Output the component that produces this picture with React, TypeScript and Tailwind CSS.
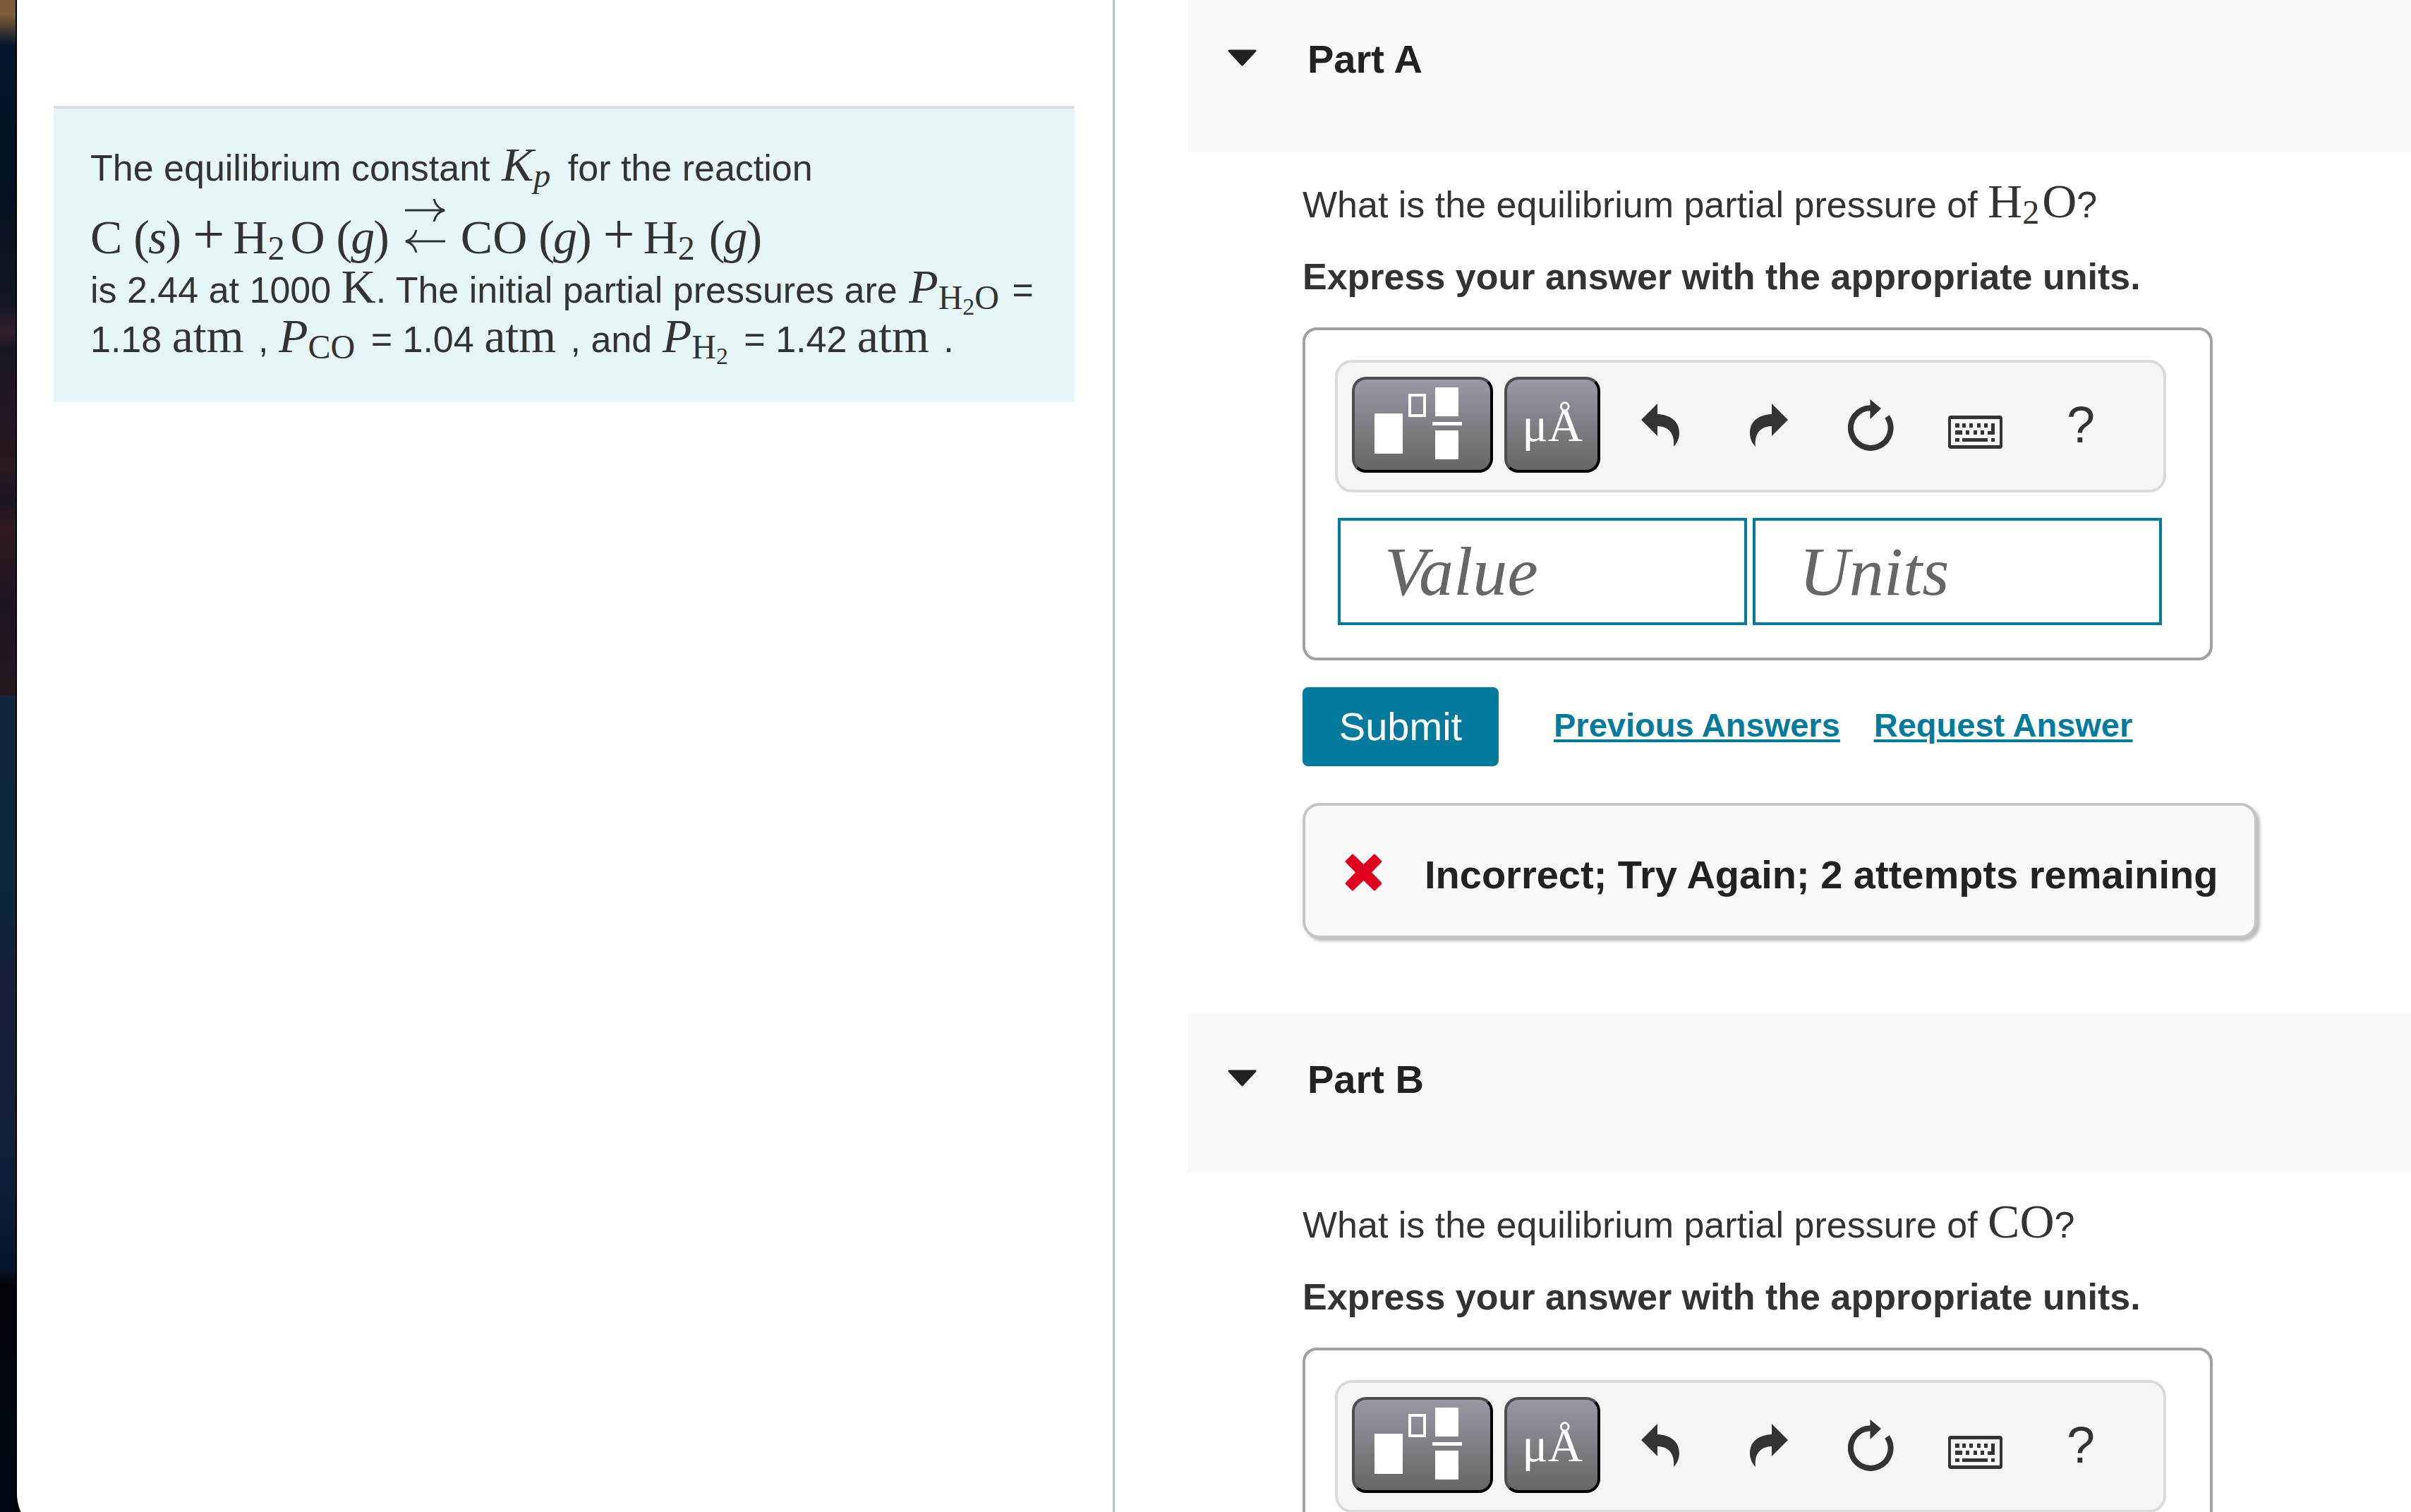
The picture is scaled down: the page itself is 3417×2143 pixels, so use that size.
import type { ReactNode } from "react";

function Math({ children, italic = false }: { children: ReactNode; italic?: boolean }) {
  return (
    <span
      className={
        italic
          ? "font-['Liberation_Serif',serif] text-[68px] leading-[0] italic"
          : "font-['Liberation_Serif',serif] text-[68px] leading-[0]"
      }
    >
      {children}
    </span>
  );
}

function Sub({ children, italic = false }: { children: ReactNode; italic?: boolean }) {
  return (
    <sub
      className={
        italic
          ? "static align-[-9px] font-['Liberation_Serif',serif] text-[48px] leading-[0] italic"
          : "static align-[-9px] font-['Liberation_Serif',serif] text-[48px] leading-[0] not-italic"
      }
    >
      {children}
    </sub>
  );
}

function SubSub({ children }: { children: ReactNode }) {
  return <sub className="static align-[-8px] text-[34px] leading-[0]">{children}</sub>;
}

function Atm() {
  return (
    <span className="mr-1.5">
      <Math>atm</Math>
    </span>
  );
}

function Phase({ children }: { children: ReactNode }) {
  return (
    <span className="ml-4">
      (<i className="-mx-0.5">{children}</i>)
    </span>
  );
}

function Plus() {
  return <span className="mr-3 ml-4 text-[80px] leading-[0]">+</span>;
}

function EquilibriumArrows() {
  return (
    <svg
      className="mx-[22px] inline-block h-[78px] w-[57px] align-baseline"
      viewBox="0 0 57 78"
      fill="none"
      stroke="#333"
      strokeWidth="3"
      role="img"
      aria-label="reversible reaction"
    >
      <path d="M0 17H55M41 1C43 9 48 15 56 17C48 19 43 25 41 33" />
      <path d="M57 61H2M16 45C14 53 9 59 1 61C9 63 14 69 16 77" />
    </svg>
  );
}

function Problem() {
  return (
    <section className="border-t-4 border-[#dcdcdc] bg-[#e6f6f7] pt-[49px] pr-6 pb-[54px] pl-[52px] text-[52px] leading-[70px] text-[#333]">
      <p>
        The equilibrium constant{" "}
        <span className="ml-0.5" />
        <Math italic>
          K<Sub italic>p</Sub>
        </Math>
        <span className="ml-2.5"> for the reaction</span>
      </p>
      <p className="pt-2 pb-[5px] font-['Liberation_Serif',serif] text-[68px] leading-[70px] whitespace-nowrap">
        C<Phase>s</Phase>
        <Plus />H<Sub>2</Sub>
        <span className="ml-2">O</span>
        <Phase>g</Phase>
        <EquilibriumArrows />
        CO<Phase>g</Phase>
        <Plus />H<Sub>2</Sub>
        <span className="ml-1" />
        <Phase>g</Phase>
      </p>
      <p>
        is 2.44 at 1000 <Math>K</Math>. The initial partial pressures are{" "}
        <span className="ml-0.5" />
        <Math italic>
          P
          <Sub>
            H<SubSub>2</SubSub>O
          </Sub>
        </Math>
        <span className="ml-1"> = </span>
        1.18 <Atm /> ,{" "}
        <Math italic>
          P<Sub>CO</Sub>
        </Math>
        <span className="ml-2"> = </span>
        1.04 <Atm /> , and{" "}
        <Math italic>
          P
          <Sub>
            H<SubSub>2</SubSub>
          </Sub>
        </Math>
        <span className="ml-2"> = </span>
        1.42 <Atm /> .
      </p>
    </section>
  );
}

function TemplateIcon() {
  return (
    <svg className="h-32 w-48" viewBox="4 4 192 128" fill="#fff" aria-hidden="true">
      <rect x="32" y="52" width="40" height="57" />
      <rect x="82" y="26" width="21" height="29" fill="none" stroke="#fff" strokeWidth="4" />
      <rect x="118" y="15" width="33" height="41" />
      <rect x="114" y="64" width="42" height="5" />
      <rect x="118" y="76" width="33" height="41" />
    </svg>
  );
}

function UndoIcon() {
  return (
    <svg className="h-[61px] w-[55px]" viewBox="0 0 55 61" fill="#333" aria-hidden="true">
      <path d="M0 23L23 0V15C43 16 54 26 54 42C54 49 51 56 46 61C48 43 39 32 23 32V46Z" />
    </svg>
  );
}

function RedoIcon() {
  return (
    <svg className="h-[61px] w-[55px]" viewBox="0 0 55 61" fill="#333" aria-hidden="true">
      <path d="M55 23L32 0V15C12 16 1 26 1 42C1 49 4 56 9 61C7 43 16 32 32 32V46Z" />
    </svg>
  );
}

function ResetIcon() {
  return (
    <svg className="h-[73px] w-[65px]" viewBox="0 0 65 73" aria-hidden="true">
      <path d="M55.500 24.500A28.300 28.300 0 1 1 32 12.300" fill="none" stroke="#333" strokeWidth="8" />
      <path d="M31.500 0L47 13L31.500 28Z" fill="#333" />
    </svg>
  );
}

function KeyboardIcon() {
  return (
    <svg className="h-[67px] w-[77px]" viewBox="0 -20 77 67" fill="#333" aria-hidden="true">
      <path
        fillRule="evenodd"
        d="M4 0H73A4 4 0 0 1 77 4V43A4 4 0 0 1 73 47H4A4 4 0 0 1 0 43V4A4 4 0 0 1 4 0ZM4 5V42H73V5Z"
      />
      <path d="M10 11h6v6h-6zM20 11h5v6h-5zM30 11h5v6h-5zM41 11h5v6h-5zM51 11h5v6h-5zM61 11h5v16H56v-5h5z" />
      <path d="M10 21h10v6H10zM25 21h5v6h-5zM36 21h5v6h-5zM46 21h5v6h-5z" />
      <path d="M10 32h6v5h-6zM20 32h36v5H20zM61 32h5v5h-5z" />
    </svg>
  );
}

const darkButton =
  "flex h-[136px] items-center justify-center rounded-[20px] border-4 border-t-[#4d4d4d] border-r-black border-b-black border-l-[#4d4d4d] bg-linear-to-b from-[#9a98a5] to-[#666] text-white";
const plainButton = "flex h-[136px] items-center justify-center text-[#333]";

function Toolbar() {
  return (
    <div
      role="toolbar"
      className="flex rounded-3xl border-4 border-[#dadada] bg-[#f5f5f5] px-5 pt-5 pb-6"
    >
      <button type="button" aria-label="Templates" className={`${darkButton} w-[200px]`}>
        <TemplateIcon />
      </button>
      <button
        type="button"
        aria-label="Symbols"
        className={`${darkButton} mr-2 ml-4 w-[136px] font-['Liberation_Serif',serif] text-[68px] leading-none`}
      >
        μÅ
      </button>
      <button type="button" aria-label="Undo" className={`${plainButton} w-[154px]`}>
        <UndoIcon />
      </button>
      <button type="button" aria-label="Redo" className={`${plainButton} w-[152px]`}>
        <RedoIcon />
      </button>
      <button type="button" aria-label="Reset" className={`${plainButton} w-[138px]`}>
        <ResetIcon />
      </button>
      <button type="button" aria-label="Keyboard shortcuts" className={`${plainButton} w-[158px]`}>
        <KeyboardIcon />
      </button>
      <button type="button" aria-label="Help" className={`${plainButton} w-[142px] text-[72px] leading-none`}>
        ?
      </button>
    </div>
  );
}

const field =
  "h-[152px] min-w-0 flex-1 border-4 border-[#047a9c] bg-white px-[62px] font-['Liberation_Serif',serif] text-[98px] text-[#333] italic outline-none placeholder:text-[#666] placeholder:opacity-100";

function AnswerBox({ part }: { part: string }) {
  return (
    <div className="mt-[37px] w-[1290px] max-w-full rounded-[20px] border-4 border-[#a0a0a0] bg-white pt-[42px] pr-[62px] pb-[46px] pl-[42px]">
      <Toolbar />
      <div className="mt-9 mr-1.5 ml-1 flex gap-2">
        <input type="text" aria-label={`Part ${part} value`} placeholder="Value" className={field} />
        <input type="text" aria-label={`Part ${part} units`} placeholder="Units" className={field} />
      </div>
    </div>
  );
}

function PartHeader({ part, first = false }: { part: string; first?: boolean }) {
  return (
    <h2
      className={
        first
          ? "bg-[#f9f9f9] pt-[52px] pb-[100px] pl-14"
          : "bg-[#f9f9f9] pt-[62px] pb-[100px] pl-14"
      }
    >
      <button
        type="button"
        aria-expanded="true"
        className="flex items-center gap-[72px] text-[56px] leading-[64px] font-bold text-[#222]"
      >
        <svg className="mb-1 h-6 w-[41px]" viewBox="0 0 41 24" aria-hidden="true">
          <path d="M2 2H39L20.500 22Z" fill="#222" stroke="#222" strokeWidth="3" strokeLinejoin="round" />
        </svg>
        Part {part}
      </button>
    </h2>
  );
}

function Question({ part, species }: { part: string; species: ReactNode }) {
  return (
    <div className="pt-[39px] pl-[162px] text-[52px] leading-[70px] text-[#333]">
      <p>
        What is the equilibrium partial pressure of <Math>{species}</Math>?
      </p>
      <p className="mt-8 font-bold">Express your answer with the appropriate units.</p>
      <AnswerBox part={part} />
    </div>
  );
}

function Actions() {
  return (
    <div className="mt-[38px] ml-[162px] flex items-center">
      <button
        type="button"
        className="h-28 w-[278px] rounded-lg bg-[#047a9c] text-[56px] leading-none text-white"
      >
        Submit
      </button>
      <div className="ml-[78px] flex gap-12 pb-1 text-[47px] leading-[70px] font-bold text-[#047a9c] underline decoration-4 underline-offset-4">
        <a href="#previous">Previous Answers</a>
        <a href="#request">Request Answer</a>
      </div>
    </div>
  );
}

function Feedback() {
  return (
    <div
      role="status"
      className="mt-[52px] mb-[106px] ml-[162px] flex h-48 w-fit items-center rounded-3xl border-4 border-[#c4c4c4] bg-[#f9f9f9] pt-1 pr-[52px] pl-14 shadow-[4px_4px_4px_#bbb]"
    >
      <svg className="h-[53px] w-[53px]" viewBox="0 0 53 53" aria-hidden="true">
        <path
          d="M10 1Q11 0 12 1L26.500 15L41 1Q42 0 43 1L52 10Q53 11 52 12L38 26.500L52 41Q53 42 52 43L43 52Q42 53 41 52L26.500 38L12 52Q11 53 10 52L1 43Q0 42 1 41L15 26.500L1 12Q0 11 1 10Z"
          fill="#df0020"
        />
      </svg>
      <strong className="ml-[60px] pt-2 text-[56px] leading-[64px] font-bold text-[#222]">
        Incorrect; Try Again; 2 attempts remaining
      </strong>
    </div>
  );
}

export default function App() {
  return (
    <div className="flex h-screen overflow-hidden bg-[linear-gradient(to_bottom,#7d5a38_0%,#7d5a38_1%,#04162c_3%,#03121f_12%,#141625_20%,#33202a_22%,#191624_23%,#2a1920_31%,#1a1522_33%,#301a1f_35%,#1c1521_40%,#261920_46%,#12273f_46%,#0b2639_60%,#191f39_65%,#10203a_78%,#06142a_84%,#020408_85%,#000814_100%)] font-['Liberation_Sans',sans-serif]">
      <div className="w-6 shrink-0 border-r-2 border-black" />
      <div className="grid h-[calc(100vh+38px)] min-w-0 flex-1 grid-cols-[1556fr_1837fr] overflow-hidden rounded-bl-[64px] bg-white">
        <aside className="min-w-0 border-r-3 border-[#a9c1d3] pt-[150px] pr-[54px] pl-[52px]">
          <Problem />
        </aside>
        <main className="min-w-0 pl-[104px]">
          <section>
            <PartHeader part="A" first />
            <Question
              part="A"
              species={
                <>
                  H<Sub>2</Sub>
                  <span className="ml-1">O</span>
                </>
              }
            />
            <Actions />
            <Feedback />
          </section>
          <section>
            <PartHeader part="B" />
            <Question part="B" species="CO" />
          </section>
        </main>
      </div>
    </div>
  );
}
